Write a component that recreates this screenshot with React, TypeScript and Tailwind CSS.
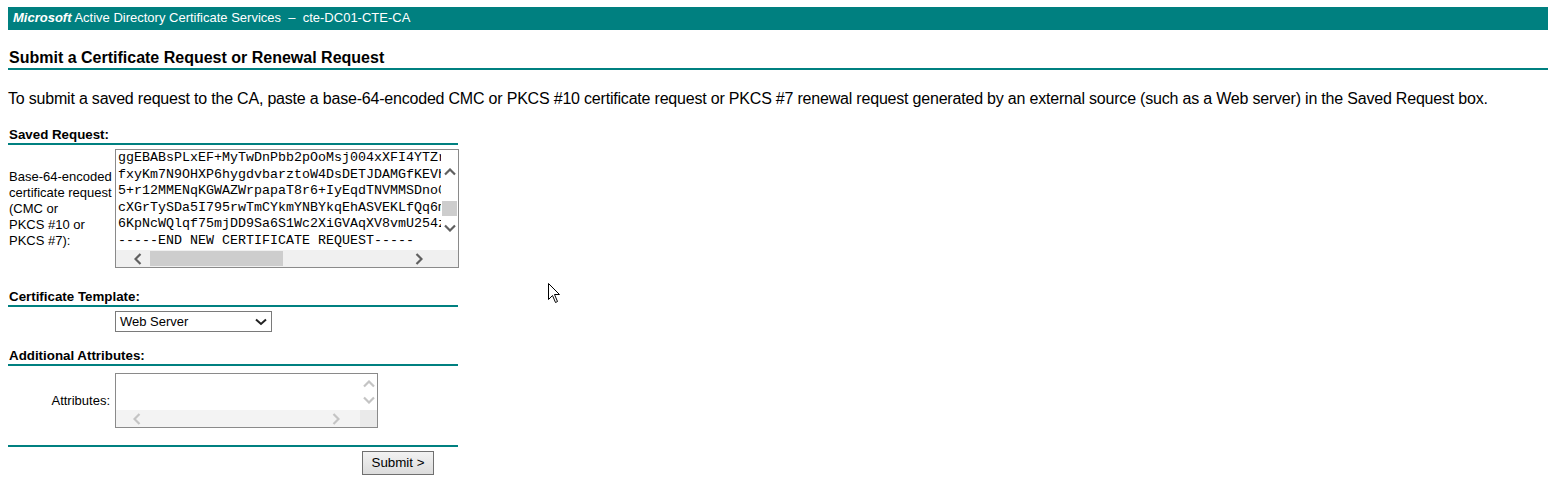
import React from "react";

const REQUEST_LINES = [
  "ggEBABsPLxEF+MyTwDnPbb2pOoMsj004xXFI4YTZrQw8",
  "fxyKm7N9OHXP6hygdvbarztoW4DsDETJDAMGfKEVhT2a",
  "5+r12MMENqKGWAZWrpapaT8r6+IyEqdTNVMMSDno0JkP",
  "cXGrTySDa5I795rwTmCYkmYNBYkqEhASVEKLfQq6mBv3",
  "6KpNcWQlqf75mjDD9Sa6S1Wc2XiGVAqXV8vmU254zRc1",
  "-----END NEW CERTIFICATE REQUEST-----",
];

function Chevron({ dir, color }: { dir: "up" | "down" | "left" | "right"; color: string }) {
  const pts = {
    up: "1,6.5 6,1.5 11,6.5",
    down: "1,1.5 6,6.5 11,1.5",
    left: "6.5,1 1.5,6 6.5,11",
    right: "1.5,1 6.5,6 1.5,11",
  }[dir];
  const vertical = dir === "up" || dir === "down";
  return (
    <svg
      width={vertical ? 12 : 8}
      height={vertical ? 8 : 12}
      viewBox={vertical ? "0 0 12 8" : "0 0 8 12"}
      className="block"
    >
      <polyline points={pts} fill="none" stroke={color} strokeWidth="2.2" />
    </svg>
  );
}

function SectionTitle({ children, className = "" }: { children: React.ReactNode; className?: string }) {
  return (
    <div
      className={`w-[450px] border-b-2 border-[#008080] text-[13.33px] leading-[16px] font-bold pl-[1px] ${className}`}
    >
      {children}
    </div>
  );
}

export default function App() {
  return (
    <div className="relative min-h-[483px] bg-white text-black font-['Liberation_Sans',Arial,sans-serif] pl-[8px] pt-[7px]">
      {/* title bar */}
      <div className="h-[23px] bg-[#008080] text-white text-[13px] leading-[21px] pl-[5px] whitespace-pre">
        <span className="font-bold italic">Microsoft</span> Active Directory Certificate Services{"\u00a0\u00a0–\u00a0\u00a0"}cte-DC01-CTE-CA
      </div>

      {/* page title */}
      <div className="mt-[19px] border-b-2 border-[#008080] pb-[1px] pl-[1px] text-[16px] leading-[18px] font-bold">
        Submit a Certificate Request or Renewal Request
      </div>

      <p className="mt-[20px] text-[16px] leading-[18px] tracking-[-0.2px]">
        To submit a saved request to the CA, paste a base-64-encoded CMC or PKCS #10 certificate request or PKCS #7
        renewal request generated by an external source (such as a Web server) in the Saved Request box.
      </p>

      <SectionTitle className="mt-[19px]">Saved Request:</SectionTitle>

      <div className="mt-[4px] grid w-[450px] grid-cols-[107px_1fr] items-center">
        <div className="text-[13px] leading-[16px] pl-[1px] whitespace-nowrap">
          Base-64-encoded
          <br />
          certificate request
          <br />
          (CMC or
          <br />
          PKCS #10 or
          <br />
          PKCS #7):
        </div>
        <div className="w-[344px] h-[119px] border border-[#8a8a8a] flex flex-col">
          <div className="flex h-[100px]">
            <div className="flex-1 overflow-hidden pl-[2px] font-['Liberation_Mono','Courier_New',monospace] text-[13.33px] leading-[16.6px] whitespace-pre">
              {REQUEST_LINES.map((l) => (
                <div key={l}>{l}</div>
              ))}
            </div>
            <div className="w-[17px] bg-white flex flex-col items-center">
              <div className="mt-[18px]">
                <Chevron dir="up" color="#606060" />
              </div>
              <div className="mt-[25px] w-[15px] h-[15px] bg-[#cdcdcd]" />
              <div className="mt-[8px]">
                <Chevron dir="down" color="#606060" />
              </div>
            </div>
          </div>
          <div className="flex h-[17px] bg-[#f0f0f0] items-center">
            <div className="ml-[18px]">
              <Chevron dir="left" color="#606060" />
            </div>
            <div className="ml-[8px] w-[133px] h-[15px] bg-[#cdcdcd]" />
            <div className="ml-auto mr-[35px]">
              <Chevron dir="right" color="#606060" />
            </div>
          </div>
        </div>
      </div>

      <SectionTitle className="mt-[21px]">Certificate Template:</SectionTitle>

      <div className="mt-[4px] pl-[107px]">
        <div className="w-[157px] h-[21px] border border-[#7a7a7a] flex items-center justify-between pl-[4px] pr-[4px] text-[13px]">
          <span>Web Server</span>
          <svg width="12" height="8" viewBox="0 0 12 8" className="block">
            <polyline points="1,1.5 6,6 11,1.5" fill="none" stroke="#222" strokeWidth="2" />
          </svg>
        </div>
      </div>

      <SectionTitle className="mt-[16px]">Additional Attributes:</SectionTitle>

      <div className="mt-[7px] grid w-[450px] grid-cols-[107px_1fr] items-center">
        <div className="text-[13px] leading-[16px] text-right pr-[5px]">Attributes:</div>
        <div className="w-[263px] h-[55px] border border-[#8a8a8a] flex flex-col">
          <div className="flex h-[36px]">
            <div className="flex-1" />
            <div className="w-[17px] flex flex-col items-center">
              <div className="mt-[6px]">
                <Chevron dir="up" color="#c4c4c4" />
              </div>
              <div className="mt-[8px]">
                <Chevron dir="down" color="#c4c4c4" />
              </div>
            </div>
          </div>
          <div className="flex h-[17px] items-center">
            <div className="flex-1 h-full bg-[#f3f3f3] flex items-center">
              <div className="ml-[17px]">
                <Chevron dir="left" color="#c4c4c4" />
              </div>
              <div className="ml-auto mr-[20px]">
                <Chevron dir="right" color="#c4c4c4" />
              </div>
            </div>
            <div className="w-[17px] h-full bg-[#eaeaea]" />
          </div>
        </div>
      </div>

      <div className="mt-[17px] w-[450px] border-t-2 border-[#008080]" />

      <div className="mt-[3px] pl-[354px]">
        <button className="w-[72px] h-[24px] border border-[#707070] bg-gradient-to-b from-[#f2f2f2] to-[#dcdcdc] text-[13.33px] text-black">
          Submit &gt;
        </button>
      </div>

      {/* mouse pointer */}
      <svg
        width="13"
        height="21"
        viewBox="0 0 13 21"
        className="absolute left-[548px] top-[283px]"
      >
        <path
          d="M0.5 0.5 L0.5 16.5 L4.5 12.5 L7.5 19.5 L9.5 18.5 L6.5 11.5 L11.5 11.5 Z"
          fill="#fff"
          stroke="#000"
          strokeWidth="1"
        />
      </svg>
    </div>
  );
}
